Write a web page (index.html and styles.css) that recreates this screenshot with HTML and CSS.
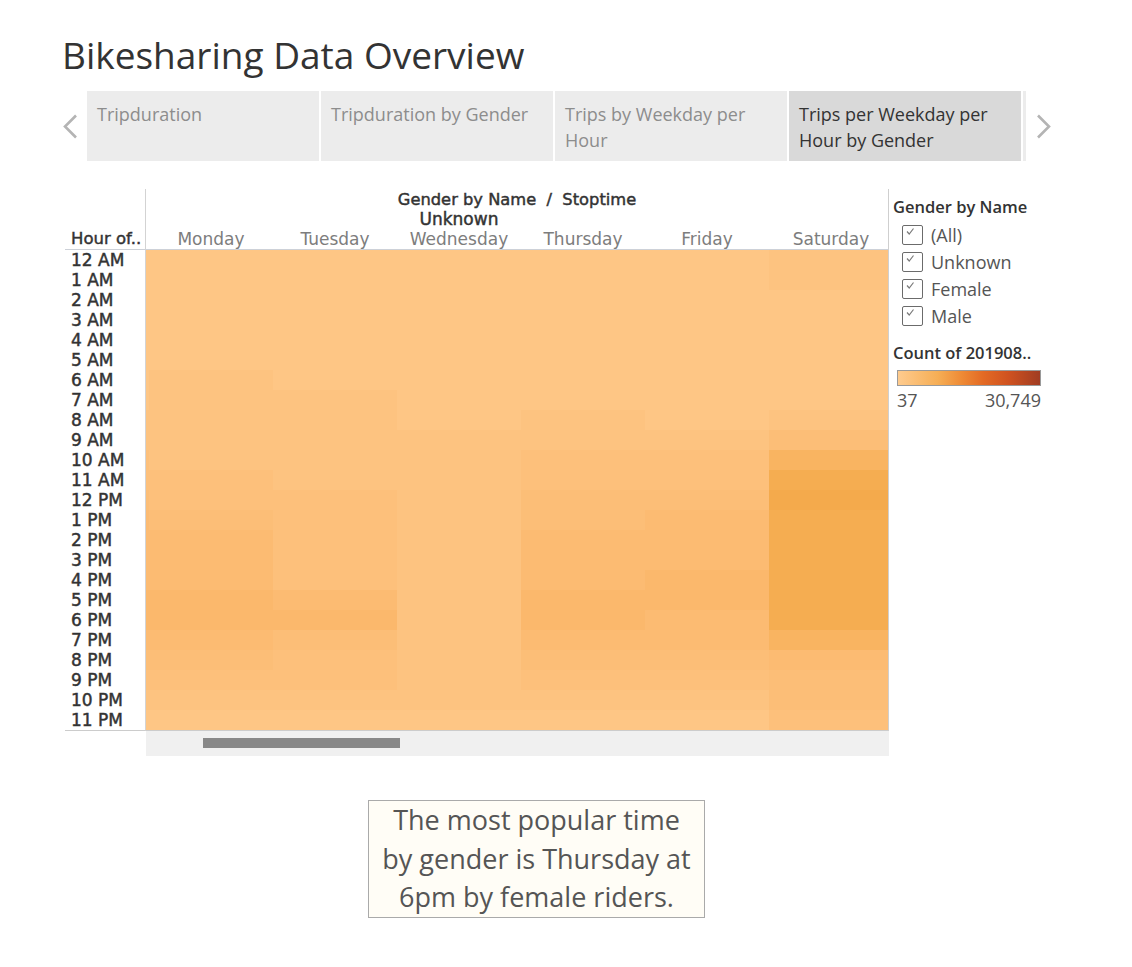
FILE: index.html
```html
<!DOCTYPE html>
<html lang="en">
<head>
<meta charset="utf-8">
<title>Bikesharing Data Overview</title>
<link rel="stylesheet" href="styles.css">
</head>
<body>
<div class="page">
  <h1 class="title">Bikesharing Data Overview</h1>

  <div class="tabs">
    <div class="arrow arrow-left">
      <svg width="16" height="25" viewBox="0 0 16 25"><polyline points="14,1.5 3,12.5 14,23.5" fill="none" stroke="#b4b4b4" stroke-width="2.6"/></svg>
    </div>
    <div class="tab">Tripduration</div>
    <div class="tab">Tripduration by Gender</div>
    <div class="tab">Trips by Weekday per Hour</div>
    <div class="tab tab-active">Trips per Weekday per Hour by Gender</div>
    <div class="tab-strip"></div>
    <div class="arrow arrow-right">
      <svg width="16" height="25" viewBox="0 0 16 25"><polyline points="2,1.5 13,12.5 2,23.5" fill="none" stroke="#b4b4b4" stroke-width="2.6"/></svg>
    </div>
  </div>

  <div class="dash">
    <div class="chart">
      <div class="corner"><span>Hour of..</span></div>
      <div class="colhead">
        <div class="colhead-title">Gender by Name&nbsp; /&nbsp; Stoptime</div>
        <div class="colhead-gender">Unknown</div>
        <div class="days">
          <div class="day-sliver"></div>
          <div class="day">Monday</div>
          <div class="day">Tuesday</div>
          <div class="day">Wednesday</div>
          <div class="day">Thursday</div>
          <div class="day">Friday</div>
          <div class="day day-cut">Saturday</div>
        </div>
      </div>

      <div class="rowlabels">
        <div>12 AM</div><div>1 AM</div><div>2 AM</div><div>3 AM</div><div>4 AM</div><div>5 AM</div>
        <div>6 AM</div><div>7 AM</div><div>8 AM</div><div>9 AM</div><div>10 AM</div><div>11 AM</div>
        <div>12 PM</div><div>1 PM</div><div>2 PM</div><div>3 PM</div><div>4 PM</div><div>5 PM</div>
        <div>6 PM</div><div>7 PM</div><div>8 PM</div><div>9 PM</div><div>10 PM</div><div>11 PM</div>
      </div>

      <div class="heat">
        <div class="c0"></div><div class="c0"></div><div class="c0"></div><div class="c0"></div><div class="c0"></div><div class="c0"></div><div class="c1"></div>
        <div class="c0"></div><div class="c0"></div><div class="c0"></div><div class="c0"></div><div class="c0"></div><div class="c0"></div><div class="c1"></div>
        <div class="c0"></div><div class="c0"></div><div class="c0"></div><div class="c0"></div><div class="c0"></div><div class="c0"></div><div class="c0"></div>
        <div class="c0"></div><div class="c0"></div><div class="c0"></div><div class="c0"></div><div class="c0"></div><div class="c0"></div><div class="c0"></div>
        <div class="c0"></div><div class="c0"></div><div class="c0"></div><div class="c0"></div><div class="c0"></div><div class="c0"></div><div class="c0"></div>
        <div class="c0"></div><div class="c0"></div><div class="c0"></div><div class="c0"></div><div class="c0"></div><div class="c0"></div><div class="c0"></div>
        <div class="c0"></div><div class="c1"></div><div class="c0"></div><div class="c0"></div><div class="c0"></div><div class="c0"></div><div class="c0"></div>
        <div class="c0"></div><div class="c1"></div><div class="c1"></div><div class="c0"></div><div class="c0"></div><div class="c0"></div><div class="c0"></div>
        <div class="c1"></div><div class="c1"></div><div class="c1"></div><div class="c0"></div><div class="c1"></div><div class="c0"></div><div class="c1"></div>
        <div class="c1"></div><div class="c1"></div><div class="c1"></div><div class="c1"></div><div class="c1"></div><div class="c1"></div><div class="c3"></div>
        <div class="c2"></div><div class="c1"></div><div class="c1"></div><div class="c1"></div><div class="c2"></div><div class="c2"></div><div class="c6"></div>
        <div class="c2"></div><div class="c2"></div><div class="c1"></div><div class="c1"></div><div class="c2"></div><div class="c2"></div><div class="c8"></div>
        <div class="c3"></div><div class="c2"></div><div class="c2"></div><div class="c1"></div><div class="c3"></div><div class="c3"></div><div class="c9"></div>
        <div class="c4"></div><div class="c3"></div><div class="c2"></div><div class="c1"></div><div class="c3"></div><div class="c4"></div><div class="c8"></div>
        <div class="c4"></div><div class="c4"></div><div class="c2"></div><div class="c1"></div><div class="c4"></div><div class="c4"></div><div class="c8"></div>
        <div class="c4"></div><div class="c4"></div><div class="c2"></div><div class="c1"></div><div class="c4"></div><div class="c4"></div><div class="c8"></div>
        <div class="c4"></div><div class="c4"></div><div class="c2"></div><div class="c1"></div><div class="c4"></div><div class="c5"></div><div class="c8"></div>
        <div class="c5"></div><div class="c5"></div><div class="c4"></div><div class="c1"></div><div class="c5"></div><div class="c5"></div><div class="c8"></div>
        <div class="c5"></div><div class="c5"></div><div class="c5"></div><div class="c1"></div><div class="c5"></div><div class="c4"></div><div class="c8"></div>
        <div class="c4"></div><div class="c4"></div><div class="c3"></div><div class="c1"></div><div class="c4"></div><div class="c4"></div><div class="c6"></div>
        <div class="c3"></div><div class="c3"></div><div class="c2"></div><div class="c1"></div><div class="c3"></div><div class="c3"></div><div class="c4"></div>
        <div class="c2"></div><div class="c2"></div><div class="c2"></div><div class="c1"></div><div class="c2"></div><div class="c2"></div><div class="c3"></div>
        <div class="c1"></div><div class="c1"></div><div class="c1"></div><div class="c1"></div><div class="c1"></div><div class="c1"></div><div class="c3"></div>
        <div class="c0"></div><div class="c0"></div><div class="c0"></div><div class="c0"></div><div class="c0"></div><div class="c0"></div><div class="c2"></div>
      </div>

      <div class="scroll-spacer"></div>
      <div class="scrollbar"><div class="thumb"></div></div>
    </div>

    <div class="legend">
      <div class="legend-title">Gender by Name</div>
      <div class="check-row"><span class="box"><svg width="20" height="20" viewBox="0 0 20 20"><polyline points="5,6.5 7.2,9 11.5,3.5" fill="none" stroke="#7a7a7a" stroke-width="1.2"/></svg></span><span class="check-label">(All)</span></div>
      <div class="check-row"><span class="box"><svg width="20" height="20" viewBox="0 0 20 20"><polyline points="5,6.5 7.2,9 11.5,3.5" fill="none" stroke="#7a7a7a" stroke-width="1.2"/></svg></span><span class="check-label">Unknown</span></div>
      <div class="check-row"><span class="box"><svg width="20" height="20" viewBox="0 0 20 20"><polyline points="5,6.5 7.2,9 11.5,3.5" fill="none" stroke="#7a7a7a" stroke-width="1.2"/></svg></span><span class="check-label">Female</span></div>
      <div class="check-row"><span class="box"><svg width="20" height="20" viewBox="0 0 20 20"><polyline points="5,6.5 7.2,9 11.5,3.5" fill="none" stroke="#7a7a7a" stroke-width="1.2"/></svg></span><span class="check-label">Male</span></div>
      <div class="legend-title count-title">Count of 201908..</div>
      <div class="gradient"></div>
      <div class="range"><span>37</span><span>30,749</span></div>
    </div>
  </div>

  <div class="note">The most popular time by gender is Thursday at 6pm by female riders.</div>
</div>
</body>
</html>
```

FILE: styles.css
```css
* { box-sizing: border-box; }

body {
  margin: 0;
  background: #ffffff;
  font-family: "Open Sans", "Liberation Sans", sans-serif;
  color: #333333;
}

.page {
  padding: 33px 0 0 62px;
}

.title {
  margin: 0;
  font-size: 37px;
  line-height: 44px;
  font-weight: 400;
  color: #333333;
}

/* ---------- tabs ---------- */
.tabs {
  margin-top: 14px;
  display: flex;
  height: 70px;
}

.arrow {
  display: flex;
  align-items: center;
}

.arrow-left {
  width: 25px;
}

.arrow-right {
  margin-left: 10px;
}

.arrow svg { display: block; }

.tab {
  width: 232px;
  margin-right: 2px;
  background: #ececec;
  padding: 10px 12px 0 10px;
  font-size: 18px;
  line-height: 26px;
  color: #8d8d8d;
}

.tab-active {
  background: #d9d9d9;
  color: #333333;
}

.tab-strip {
  width: 3px;
  background: #ececec;
}

/* ---------- dashboard ---------- */
.dash {
  margin-top: 28px;
  margin-left: 3px;
  display: flex;
  align-items: flex-start;
}

.chart {
  display: grid;
  grid-template-columns: 81px 743px;
  grid-template-rows: 61px 481px 25px;
}

.corner,
.colhead,
.rowlabels {
  font-family: "DejaVu Sans", "Open Sans", sans-serif;
}

.corner {
  border-bottom: 1px solid #cdd1d8;
  border-right: 1px solid #d3d3d3;
  display: flex;
  align-items: flex-end;
  padding-left: 6px;
  font-size: 16.5px;
  line-height: 20px;
  color: #333333;
  -webkit-text-stroke: 0.45px #333333;
  white-space: nowrap;
}

.colhead {
  border-bottom: 1px solid #cdd1d8;
  border-right: 1px solid #cfcfcf;
  width: 743px;
  padding-top: 1px;
}

.colhead-title {
  text-align: center;
  font-size: 16.3px;
  line-height: 20px;
  color: #333333;
  -webkit-text-stroke: 0.45px #333333;
  white-space: nowrap;
}

.colhead-gender {
  margin-left: -121px;
  width: 868px;
  text-align: center;
  font-size: 17px;
  line-height: 19px;
  color: #333333;
  -webkit-text-stroke: 0.45px #333333;
}

.days {
  display: grid;
  grid-template-columns: 3px repeat(5, 124px) 118px;
  font-size: 17px;
  line-height: 20px;
  height: 20px;
  color: #7d7d7d;
}

.day {
  text-align: center;
  white-space: nowrap;
}

.day-cut {
  margin-right: -6px;
}

.rowlabels {
  border-right: 1px solid #d3d3d3;
  border-bottom: 1px solid #cccccc;
  padding-left: 6px;
  font-size: 17px;
  line-height: 20px;
  color: #333333;
  -webkit-text-stroke: 0.45px #333333;
}

.rowlabels div {
  height: 20px;
  white-space: nowrap;
}

.heat {
  display: grid;
  grid-template-columns: 3px repeat(6, 124px);
  grid-auto-rows: 20px;
  width: 743px;
  overflow: hidden;
  border-right: 1px solid #cfcfcf;
  border-bottom: 1px solid #cccccc;
}

.c0 { background: #fec685; }
.c1 { background: #fdc380; }
.c2 { background: #fdc07b; }
.c3 { background: #fcbe77; }
.c4 { background: #fcbb72; }
.c5 { background: #fbb86c; }
.c6 { background: #f9b461; }
.c7 { background: #f7b058; }
.c8 { background: #f5ad51; }
.c9 { background: #f4aa4c; }

.scrollbar {
  background: #f0f0f0;
  padding: 7px 0 0 57px;
  width: 743px;
}

.thumb {
  width: 197px;
  height: 10px;
  background: #888888;
}

/* ---------- legend ---------- */
.legend {
  padding: 8px 0 0 4px;
  width: 160px;
}

.legend-title {
  font-size: 16.5px;
  line-height: 20px;
  font-weight: 600;
  color: #333333;
  white-space: nowrap;
}

.check-row {
  display: flex;
  align-items: center;
  height: 27px;
}

.legend-title + .check-row {
  margin-top: 4px;
}

.box {
  width: 21px;
  height: 20px;
  margin-left: 9px;
  border: 1px solid #6b6b6b;
  border-radius: 2px;
  background: #ffffff;
  display: flex;
}

.box svg {
  display: block;
  margin: -1px 0 0 -1px;
}

.check-label {
  margin-left: 8px;
  font-size: 18px;
  color: #555555;
}

.count-title {
  margin-top: 14px;
}

.gradient {
  margin: 7px 0 0 4px;
  width: 144px;
  height: 16px;
  border: 1px solid #9a9a9a;
  background: linear-gradient(to right, #fecb8e 0%, #f6ae55 28%, #ee8a35 45%, #e36a24 60%, #cf5220 78%, #a03c22 100%);
}

.range {
  margin: 4px 0 0 4px;
  width: 144px;
  display: flex;
  justify-content: space-between;
  font-size: 18px;
  line-height: 20px;
  color: #555555;
}

/* ---------- note ---------- */
.note {
  margin: 44px 0 0 306px;
  width: 337px;
  background: #fffdf6;
  border: 1px solid #aaaaaa;
  text-align: center;
  font-size: 27px;
  line-height: 38.5px;
  color: #555555;
  padding: 0 8px;
}
```
